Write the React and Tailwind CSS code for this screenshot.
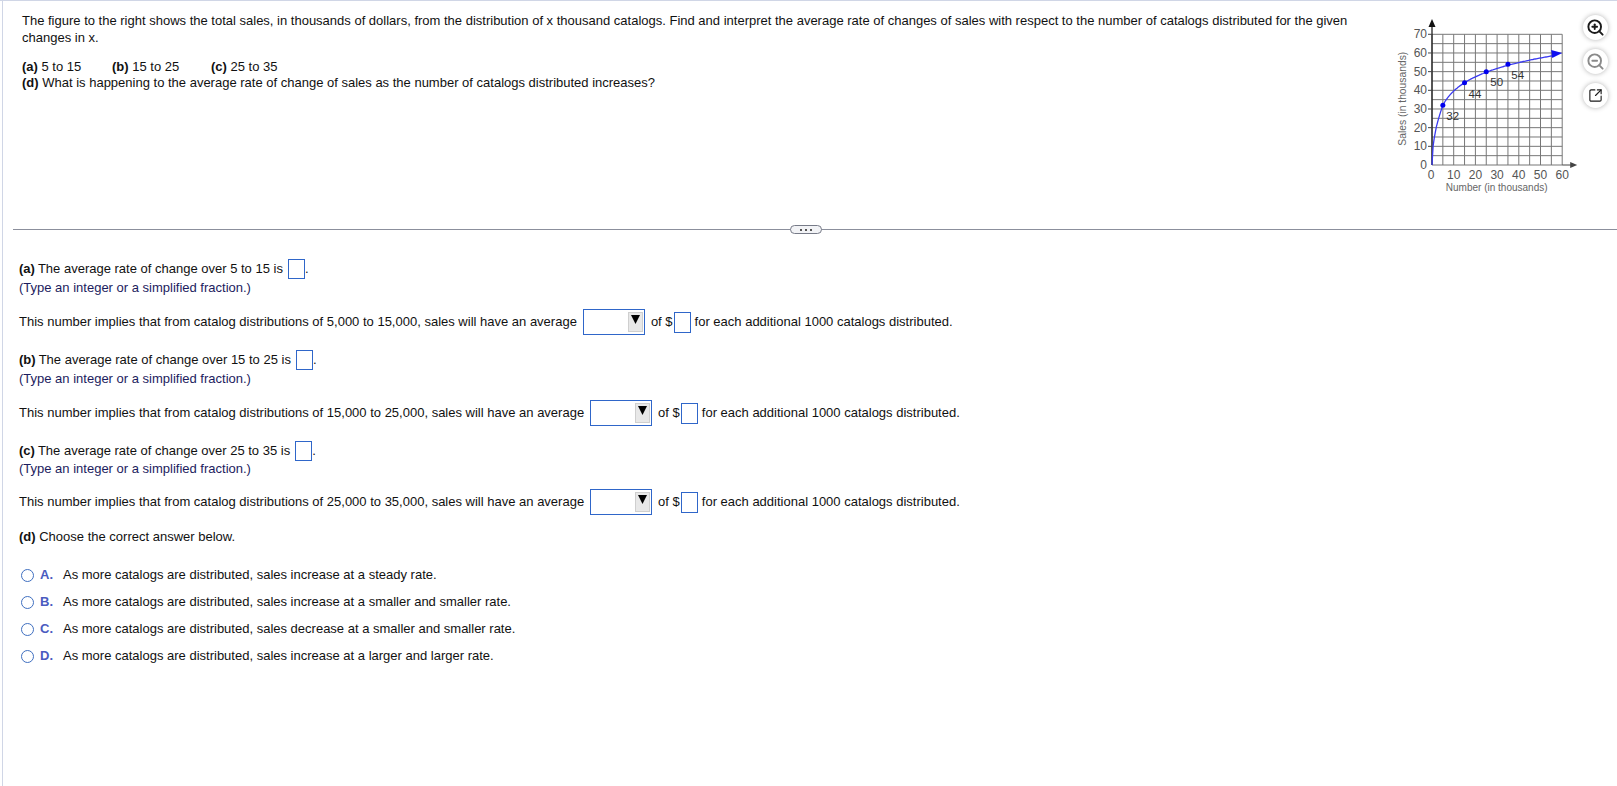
import { ZoomIn, ZoomOut, SquareArrowOutUpRight } from "lucide-react";

const xTicks = [0, 10, 20, 30, 40, 50, 60];
const yTicks = [10, 20, 30, 40, 50, 60, 70];
const points = [
  [5, 32],
  [15, 44],
  [25, 50],
  [35, 54],
];
const pointLabels = [
  ["32", 82.7, 109.7],
  ["44", 105, 87.7],
  ["50", 126.7, 76],
  ["54", 147.7, 69.3],
];
const options = [
  ["A.", "As more catalogs are distributed, sales increase at a steady rate."],
  ["B.", "As more catalogs are distributed, sales increase at a smaller and smaller rate."],
  ["C.", "As more catalogs are distributed, sales decrease at a smaller and smaller rate."],
  ["D.", "As more catalogs are distributed, sales increase at a larger and larger rate."],
];

// chart space: origin at (62, 155), 2.17px per x unit, 1.867px per y unit
const px = (x) => 62 + x * 2.17;
const py = (y) => 155 - y * 1.867;
const sales = (x) => (x < 5 ? 14.3 * Math.sqrt(x) : 32 + 11 * Math.log(x / 5));

function SalesChart() {
  const gridX = Array.from({ length: 13 }, (_, i) => i * 5);
  const gridY = Array.from({ length: 15 }, (_, i) => i * 5);
  const curve = [];
  for (let x = 0; x <= 56; x += 0.5) {
    curve.push(`${px(x).toFixed(1)},${py(sales(x)).toFixed(1)}`);
  }

  return (
    <svg width="210" height="190" viewBox="0 0 210 190" className="mt-[8px] block shrink-0" style={{ fontFamily: '"Liberation Sans", Arial, sans-serif' }}>
      {gridX.map((x) => (
        <line key={x} x1={px(x)} x2={px(x)} y1={py(70)} y2={py(0)} stroke="#777777" strokeWidth="1" />
      ))}
      {gridY.map((y) => (
        <line key={y} x1={px(0)} x2={px(60)} y1={py(y)} y2={py(y)} stroke="#777777" strokeWidth="1" />
      ))}
      <line x1={px(0)} x2={px(0)} y1="12" y2={py(0)} stroke="#111111" strokeWidth="1.2" />
      <path d={`M${px(0) - 3.5} 17 L${px(0)} 9 L${px(0) + 3.5} 17 Z`} fill="#111111" />
      <line x1={px(60)} x2={px(60) + 12} y1={py(0)} y2={py(0)} stroke="#444444" strokeWidth="1" />
      <path d={`M${px(60) + 8} ${py(0) - 3} L${px(60) + 15} ${py(0)} L${px(60) + 8} ${py(0) + 3} Z`} fill="#444444" />
      {yTicks.map((y) => (
        <g key={y}>
          <line x1={px(0) - 4} x2={px(0)} y1={py(y)} y2={py(y)} stroke="#444444" />
          <text x={px(0) - 5} y={py(y) + 4} textAnchor="end" fontSize="12" fill="#555555">{y}</text>
        </g>
      ))}
      <text x={px(0) - 5} y={py(0) + 4} textAnchor="end" fontSize="12" fill="#555555">0</text>
      {xTicks.map((x) => (
        <text key={x} x={px(x) - (x === 0 ? 1 : 0)} y="169" textAnchor="middle" fontSize="12" fill="#555555">{x}</text>
      ))}
      <text x="126.7" y="181" textAnchor="middle" fontSize="10" fill="#666666">Number (in thousands)</text>
      <text transform="translate(36 88.7) rotate(-90)" textAnchor="middle" fontSize="10.3" fill="#666666">Sales (in thousands)</text>
      <polyline points={curve.join(" ")} fill="none" stroke="#3a3af0" strokeWidth="1.3" />
      <path d={`M${px(60) - 11} ${py(60) - 3} L${px(60)} ${py(60)} L${px(60) - 10} ${py(60) + 5} Z`} fill="#1010f0" />
      {points.map(([x, y]) => (
        <circle key={x} cx={px(x)} cy={py(y)} r="2.5" fill="#0000ee" />
      ))}
      {pointLabels.map(([label, x, y]) => (
        <text key={label} x={x} y={y} textAnchor="middle" fontSize="11.5" fill="#333333">{label}</text>
      ))}
    </svg>
  );
}

function ToolButton({ children }) {
  return (
    <button className="grid h-[25px] w-[25px] place-items-center rounded-full bg-white shadow-[0_0_5px_rgba(0,0,0,0.3)]">
      {children}
    </button>
  );
}

function AverageRow({ range, className }) {
  return (
    <p className={`flex items-center ${className}`}>
      <span>This number implies that from catalog distributions of {range}, sales will have an average</span>
      <span className="ml-[6px] flex h-[26px] w-[62px] items-center justify-end border border-[#2f66c9] bg-white pr-px">
        <span className="grid h-[20px] w-[15px] place-items-start justify-center border border-[#cfcfcf] bg-[#e8e8e8]">
          <svg width="9" height="9" viewBox="0 0 9 9" className="mt-[2px]">
            <path d="M0 0 H9 L4.5 9 Z" fill="#000000" />
          </svg>
        </span>
      </span>
      <span className="ml-[6px]">of $</span>
      <span className="ml-px h-[21px] w-[17px] border border-[#2f66c9] bg-white" />
      <span className="ml-[4px]">for each additional 1000 catalogs distributed.</span>
    </p>
  );
}

function RateLine({ part, range, className }) {
  return (
    <p className={`flex h-[20px] items-center ${className}`}>
      <b className="font-bold">({part})</b>
      <span className="ml-[3px]">The average rate of change over {range} is</span>
      <span className="ml-[5px] h-[20px] w-[17px] border border-[#2f66c9] bg-white" />
      <span>.</span>
    </p>
  );
}

function Hint({ className }) {
  return <p className={`text-[#1c1c5e] ${className}`}>(Type an integer or a simplified fraction.)</p>;
}

export default function App() {
  return (
    <div className="h-[786px] w-full overflow-hidden border-t border-[#d0d6e6] bg-white pl-[2px] pt-px text-[13px] leading-[16px] text-[#111111]" style={{ fontFamily: '"Liberation Sans", Arial, sans-serif' }}>
      <div className="relative -mt-px h-[786px] border-l border-[#d0d6e6] pt-px">
        <div className="flex h-[227px] items-start">
          <div className="w-[1367px] shrink-0 pl-[19px] pt-[11px]">
            <p className="w-[1330px] leading-[16.5px]">
              The figure to the right shows the total sales, in thousands of dollars, from the distribution of x thousand catalogs. Find and interpret the average rate of changes of sales with respect to the number of catalogs distributed for the given changes in x.
            </p>
            <p className="mt-[13px] flex">
              <span className="w-[90px]"><b>(a)</b> 5 to 15</span>
              <span className="w-[99px]"><b>(b)</b> 15 to 25</span>
              <span><b>(c)</b> 25 to 35</span>
            </p>
            <p><b>(d)</b> What is happening to the average rate of change of sales as the number of catalogs distributed increases?</p>
          </div>
          <SalesChart />
          <div className="ml-[3px] flex flex-col gap-[9px] pt-[13px]">
            <ToolButton><ZoomIn size={19} strokeWidth={2.4} color="#1a1a1a" /></ToolButton>
            <ToolButton><ZoomOut size={19} strokeWidth={2.4} color="#8a8a8a" /></ToolButton>
            <ToolButton><SquareArrowOutUpRight size={15} strokeWidth={1.8} color="#1a1a1a" /></ToolButton>
          </div>
        </div>

        <div className="relative ml-[10px] h-px bg-[#8b8f9c]">
          <span className="absolute left-[777px] top-[-4px] flex h-[9px] w-[32px] items-center justify-center gap-[3px] rounded-full border border-[#777b88] bg-[#f2f3f6]">
            <i className="h-[2px] w-[2px] bg-[#555555]" />
            <i className="h-[2px] w-[2px] bg-[#555555]" />
            <i className="h-[2px] w-[2px] bg-[#555555]" />
          </span>
        </div>

        <div className="pl-[16px]">
          <RateLine part="a" range="5 to 15" className="mt-[29px]" />
          <Hint className="mt-[1px]" />
          <AverageRow range="5,000 to 15,000" className="mt-[13px]" />
          <RateLine part="b" range="15 to 25" className="mt-[15px]" />
          <Hint className="mt-[1px]" />
          <AverageRow range="15,000 to 25,000" className="mt-[13px]" />
          <RateLine part="c" range="25 to 35" className="mt-[15px]" />
          <Hint />
          <AverageRow range="25,000 to 35,000" className="mt-[12px]" />
          <p className="mt-[14px]"><b>(d)</b> Choose the correct answer below.</p>
          <ul className="mt-[22px] flex flex-col gap-[11px]">
            {options.map(([letter, text]) => (
              <li key={letter} className="flex items-center">
                <span className="ml-[2px] h-[13px] w-[13px] rounded-full border-[1.5px] border-[#3f6fc0] bg-white" />
                <span className="ml-[6px] w-[23px] font-bold text-[#4a5bc0]">{letter}</span>
                <span>{text}</span>
              </li>
            ))}
          </ul>
        </div>
      </div>
    </div>
  );
}
